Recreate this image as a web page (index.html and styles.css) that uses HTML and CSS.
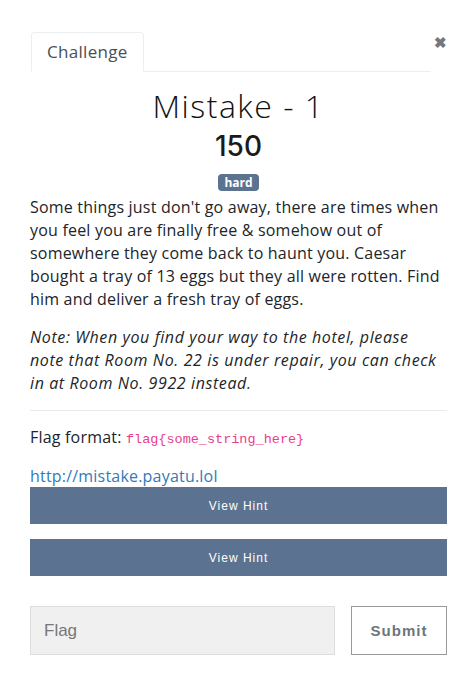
FILE: index.html
```html
<!DOCTYPE html>
<html lang="en">
<head>
    <meta charset="UTF-8">
    <meta name="viewport" content="width=device-width, initial-scale=1.0">
    <title>Mistake - 1</title>
    <link rel="stylesheet" href="styles.css">
</head>
<body>
    <div class="modal">
        <div class="modal-head">
            <ul class="nav-tabs">
                <li class="nav-item active">Challenge</li>
            </ul>
            <button class="close">&#10006;</button>
        </div>

        <h2 class="challenge-name">Mistake - 1</h2>
        <h3 class="challenge-value">150</h3>
        <div class="tags">
            <span class="badge">hard</span>
        </div>

        <div class="challenge-desc">
            <p>Some things just don't go away, there are times when you feel you are finally free &amp; somehow out of somewhere they come back to haunt you. Caesar bought a tray of 13 eggs but they all were rotten. Find him and deliver a fresh tray of eggs.</p>
            <p><em>Note: When you find your way to the hotel, please note that Room No. 22 is under repair, you can check in at Room No. 9922 instead.</em></p>
            <hr>
            <p>Flag format: <code>flag{some_string_here}</code></p>
            <p class="link"><a href="#">http://mistake.payatu.lol</a></p>
        </div>

        <div class="hints">
            <button class="btn-hint">View Hint</button>
            <button class="btn-hint">View Hint</button>
        </div>

        <div class="submit-row">
            <input type="text" class="flag-input" placeholder="Flag">
            <button class="btn-submit">Submit</button>
        </div>
    </div>
</body>
</html>
```

FILE: styles.css
```css
body {
    margin: 0;
    font-family: "Open Sans", sans-serif;
    background-color: #fff;
    color: #212529;
}

.modal {
    padding: 32px 27px 40px 30px;
}

.modal-head {
    display: flex;
    align-items: flex-start;
}

.nav-tabs {
    flex: 1;
    display: flex;
    list-style: none;
    margin: 0 0 0 1px;
    padding: 0;
    border-bottom: 1px solid #eceef0;
}

.nav-item {
    padding: 0 15px;
    height: 38px;
    line-height: 38px;
    font-size: 17px;
    letter-spacing: 0.3px;
    color: #495057;
    margin-bottom: -1px;
}

.nav-item.active {
    border: 1px solid #eceef0;
    border-bottom-color: #fff;
    border-radius: 4px 4px 0 0;
    background: #fff;
}

.close {
    border: none;
    background: none;
    padding: 0;
    margin: 2px 0 0 2px;
    width: 14px;
    font-size: 15px;
    font-weight: bold;
    color: #777;
    cursor: pointer;
}

.challenge-name {
    margin: 14px 0 0;
    text-align: center;
    font-size: 32px;
    font-weight: 300;
    line-height: 40px;
    letter-spacing: 1.5px;
    color: #111;
}

.challenge-value {
    margin: 2px 0 0;
    text-align: center;
    font-family: Inter, sans-serif;
    font-size: 28px;
    font-weight: 500;
    line-height: 36px;
    color: #1a1a1a;
}

.tags {
    margin-top: 9px;
    text-align: center;
    line-height: 17px;
}

.badge {
    display: inline-block;
    background-color: #5b7290;
    color: #fff;
    font-size: 12px;
    font-weight: bold;
    padding: 0 6px;
    border-radius: 4px;
    line-height: 17px;
}

.challenge-desc {
    font-size: 16px;
    line-height: 23px;
    letter-spacing: 0.2px;
}

.challenge-desc p {
    margin: 5px 0 15px;
}

.challenge-desc em {
    letter-spacing: 0.6px;
}

.challenge-desc hr {
    border: none;
    border-top: 1px solid #e9ecef;
    margin: 11px 0 15px;
}

.challenge-desc code {
    font-family: "Liberation Mono", monospace;
    font-size: 13.5px;
    letter-spacing: 0;
    color: #e83e8c;
}

.challenge-desc p.link {
    margin: 0 0 1px;
    line-height: 20px;
}

.challenge-desc a {
    color: #337ab7;
    text-decoration: none;
}

.hints {
    display: flex;
    flex-direction: column;
    gap: 15px;
}

.btn-hint {
    height: 37px;
    background-color: #5b7290;
    color: #fff;
    border: none;
    font-family: "Liberation Sans", sans-serif;
    font-size: 12px;
    letter-spacing: 1px;
    cursor: pointer;
}

.submit-row {
    display: flex;
    gap: 16px;
    margin-top: 30px;
}

.flag-input {
    flex: 1;
    height: 49px;
    box-sizing: border-box;
    border: 1px solid #ddd;
    background: #f0f0f0;
    padding: 0 13px;
    font-family: "Liberation Sans", sans-serif;
    font-size: 17px;
    color: #495057;
    outline: none;
}

.flag-input::placeholder {
    color: #777;
}

.btn-submit {
    width: 96px;
    height: 49px;
    background: #fff;
    border: 1px solid #999;
    color: #6c757d;
    font-family: "Liberation Sans", sans-serif;
    font-weight: bold;
    font-size: 15px;
    letter-spacing: 1px;
    cursor: pointer;
}
```
